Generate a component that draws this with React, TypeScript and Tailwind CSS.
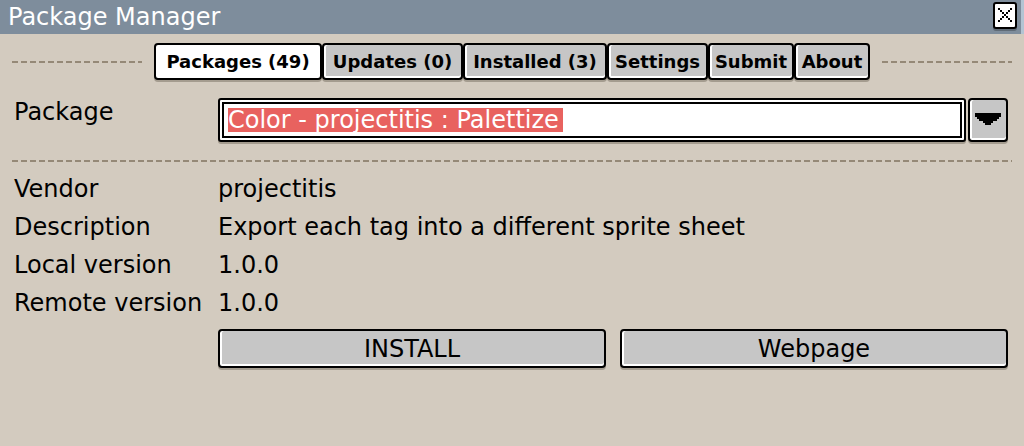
const font = { fontFamily: '"DejaVu Sans", Verdana, sans-serif' };

const tabs = [
  { label: "Packages (49)", w: "w-[168px]", active: true },
  { label: "Updates (0)", w: "w-[141px]" },
  { label: "Installed (3)", w: "w-[144px]" },
  { label: "Settings", w: "w-[101px]" },
  { label: "Submit", w: "w-[86px]" },
  { label: "About", w: "w-[76px]" },
];

const details = [
  ["Vendor", "projectitis"],
  ["Description", "Export each tag into a different sprite sheet"],
  ["Local version", "1.0.0"],
  ["Remote version", "1.0.0"],
];

function Dashes({ className = "" }: { className?: string }) {
  return (
    <div
      className={`h-[2px] bg-[repeating-linear-gradient(90deg,#958977_0_6px,transparent_6px_9px)] ${className}`}
    />
  );
}

function PixelButton({
  children,
  className = "",
}: {
  children: React.ReactNode;
  className?: string;
}) {
  return (
    <button
      className={`flex items-center justify-center border-2 border-black rounded-[4px] bg-[#c6c6c6] text-black shadow-[inset_2px_0_0_#ffffff,inset_0_-2px_0_#ffffff,0_2px_0_#a49c8f] ${className}`}
    >
      {children}
    </button>
  );
}

export default function App() {
  return (
    <div
      className="w-[1024px] h-[446px] bg-[#d3cbbf] flex flex-col overflow-hidden text-black"
      style={font}
    >
      {/* title bar */}
      <div className="h-[34px] shrink-0 bg-[#7e8d9c] flex items-center">
        <span className="pl-[8px] text-[24px] leading-[34px] text-white flex-1">
          Package Manager
        </span>
        <div className="w-[24px] h-[27px] mt-[-4px] mr-[4px] border-2 border-black rounded-[3px] bg-white shadow-[0_2px_0_#5f6b77] flex items-center justify-center">
          <svg width="14" height="14" viewBox="0 0 7 7" shapeRendering="crispEdges">
            <path
              d="M0 0h1v1H0zM1 1h1v1H1zM2 2h1v1H2zM3 3h1v1H3zM4 4h1v1H4zM5 5h1v1H5zM6 6h1v1H6zM6 0h1v1H6zM5 1h1v1H5zM4 2h1v1H4zM2 4h1v1H2zM1 5h1v1H1zM0 6h1v1H0z"
              fill="#000"
            />
          </svg>
        </div>
        <div className="w-[3px] h-full bg-[#b3c4d3]" />
      </div>

      {/* tabs */}
      <div className="mt-[9px] px-[12px] flex items-center">
        <Dashes className="flex-1 mr-[12px]" />
        <div className="flex">
          {tabs.map((t) => (
            <button
              key={t.label}
              className={`${t.w} h-[37px] flex items-center justify-center border-2 border-black rounded-[4px] text-[18px] font-bold ${
                t.active
                  ? "bg-white shadow-[0_2px_0_#a49c8f]"
                  : "bg-[#c6c6c6] shadow-[inset_2px_0_0_#ffffff,inset_0_-2px_0_#ffffff,0_2px_0_#a49c8f]"
              }`}
            >
              {t.label}
            </button>
          ))}
        </div>
        <Dashes className="flex-1 ml-[12px]" />
      </div>

      {/* package selector */}
      <div className="mt-[18px] flex pr-[16px]">
        <div className="w-[218px] pl-[14px] text-[24px] leading-[28px]">Package</div>
        <div className="flex-1 h-[44px] border-2 border-black rounded-[3px] bg-white p-[2px] shadow-[0_2px_0_#a49c8f]">
          <div className="h-full border-2 border-black bg-white flex items-center pl-[4px]">
            <span className="bg-[#e8625f] text-white text-[24px] leading-[24px] pr-[4px]">
              Color - projectitis : Palettize
            </span>
          </div>
        </div>
        <PixelButton className="w-[40px] h-[44px] ml-[2px]">
          <svg width="26" height="14" viewBox="0 0 13 7" shapeRendering="crispEdges">
            <path d="M0 0h13v2H0zM1 2h11v1H1zM2 3h9v1H2zM4 4h5v1H4zM5 5h3v1H5z" fill="#000" />
          </svg>
        </PixelButton>
      </div>

      <Dashes className="mt-[18px] mx-[12px]" />

      {/* details */}
      <div className="mt-[8px] flex flex-col">
        {details.map(([k, v]) => (
          <div key={k} className="flex h-[38px] items-center text-[24px] leading-[38px]">
            <span className="w-[218px] pl-[14px]">{k}</span>
            <span>{v}</span>
          </div>
        ))}
      </div>

      {/* actions */}
      <div className="mt-[7px] flex gap-[14px] pl-[218px] pr-[16px]">
        <PixelButton className="flex-1 h-[39px] text-[24px]">INSTALL</PixelButton>
        <PixelButton className="flex-1 h-[39px] text-[24px]">Webpage</PixelButton>
      </div>
    </div>
  );
}
